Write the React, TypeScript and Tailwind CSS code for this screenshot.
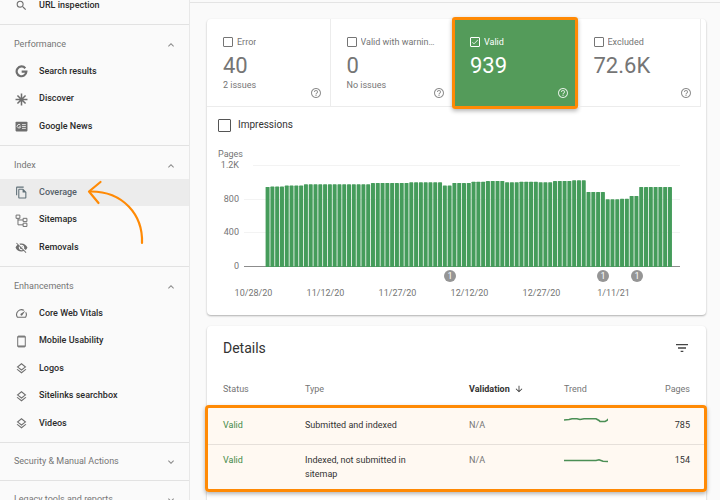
import { useState, type ReactNode } from "react";
import clsx from "clsx";
import {
  MdArrowDownward,
  MdCheck,
  MdFilterList,
  MdHelpOutline,
  MdKeyboardArrowDown,
  MdKeyboardArrowUp,
  MdOutlineFileCopy,
  MdOutlineLayers,
  MdOutlineSpeed,
  MdSearch,
  MdVisibilityOff
} from "react-icons/md";

type NavItem = { label: string; icon: ReactNode };
type NavSection = { title: string; items: NavItem[] };

const sections: NavSection[] = [
  {
    title: "Performance",
    items: [
      { label: "Search results", icon: <GoogleIcon /> },
      { label: "Discover", icon: <DiscoverIcon /> },
      { label: "Google News", icon: <NewsIcon /> }
    ]
  },
  {
    title: "Index",
    items: [
      { label: "Coverage", icon: <MdOutlineFileCopy /> },
      { label: "Sitemaps", icon: <SitemapIcon /> },
      { label: "Removals", icon: <MdVisibilityOff /> }
    ]
  },
  {
    title: "Enhancements",
    items: [
      { label: "Core Web Vitals", icon: <MdOutlineSpeed /> },
      { label: "Mobile Usability", icon: <PhoneIcon /> },
      { label: "Logos", icon: <MdOutlineLayers /> },
      { label: "Sitelinks searchbox", icon: <MdOutlineLayers /> },
      { label: "Videos", icon: <MdOutlineLayers /> }
    ]
  },
  { title: "Security & Manual Actions", items: [] },
  { title: "Legacy tools and reports", items: [] }
];

const metrics = [
  { id: "error", label: "Error", value: "40", note: "2 issues" },
  { id: "warning", label: "Valid with warnings", value: "0", note: "No issues" },
  { id: "valid", label: "Valid", value: "939", note: "" },
  { id: "excluded", label: "Excluded", value: "72.6K", note: "" }
];

// [number of days, indexed pages]
const pageRuns = [
  [1, 940], [3, 944], [4, 956], [14, 970], [8, 986], [7, 994], [2, 957],
  [4, 987], [3, 1001], [4, 1010], [3, 995], [4, 1002], [3, 995], [4, 1010],
  [3, 1018], [4, 880], [3, 792], [2, 798], [2, 833], [7, 940]
];
const dailyPages = pageRuns.flatMap(([days, pages]) => Array<number>(days).fill(pages));

const rows = [
  {
    type: "Submitted and indexed",
    pages: 785,
    trend: "M0 2 L5 1.5 L8 0.8 L13 0.8 L16 1.5 L20 0.8 L32 0.8 L35 2.5 L36 3.5 L41 3.5 L43 2.5 L44 1"
  },
  {
    type: "Indexed, not submitted in sitemap",
    pages: 154,
    trend: "M0 7.5 L32 7.5 L35 6.8 L37 7.5 L39 8.3 L44 8.5"
  }
];

export default function App() {
  return (
    <div className="flex h-screen overflow-hidden bg-[#fafafa] font-[Roboto,'Liberation_Sans',sans-serif] text-[9px] text-[#757575]">
      <Sidebar />
      <main className="min-w-0 flex-1">
        <div className="h-[3px] border-b border-[#e4e4e4]" />
        <div className="space-y-[11px] pt-4 pr-3.5 pl-[17px]">
          <CoverageCard />
          <DetailsCard />
        </div>
      </main>
    </div>
  );
}

function Sidebar() {
  return (
    <nav className="-mt-2 w-[190px] shrink-0 border-r border-[#e8e8e8]">
      <ul className="pb-[5px]">
        <NavLink label="URL inspection" icon={<MdSearch />} />
      </ul>
      {sections.map((section) => (
        <Section key={section.title} section={section} />
      ))}
    </nav>
  );
}

function Section({ section }: { section: NavSection }) {
  const expandable = section.items.length > 0;
  const [open, setOpen] = useState(expandable);

  return (
    <section className="border-t border-[#e2e2e2] py-[5px]">
      <button
        type="button"
        aria-expanded={open}
        onClick={() => setOpen(!open)}
        className={clsx(
          "flex w-full items-center justify-between pr-3 pl-3.5 text-left",
          expandable ? "h-7 pt-px" : "h-[27px]"
        )}
      >
        {section.title}
        {open ? (
          <MdKeyboardArrowUp className="size-3 text-[#8a8a8a]" />
        ) : (
          <MdKeyboardArrowDown className="size-3 text-[#8a8a8a]" />
        )}
      </button>
      {open && expandable ? (
        <ul>
          {section.items.map((item) => (
            <NavLink key={item.label} {...item} active={item.label === "Coverage"} />
          ))}
        </ul>
      ) : null}
    </section>
  );
}

function NavLink({ label, icon, active = false }: NavItem & { active?: boolean }) {
  return (
    <li className={clsx("relative h-[27px] even:h-7", active && "bg-[#ececec]")}>
      <a
        href="#"
        aria-current={active ? "page" : undefined}
        className={clsx(
          "flex h-full items-center gap-[11px] pl-[15px] font-medium",
          active ? "text-[#546069]" : "text-[#2b2b2b]"
        )}
      >
        <span
          className={clsx(
            "[&>svg]:size-[13px]",
            active ? "text-[#607078]" : "text-[#6e6e6e]"
          )}
        >
          {icon}
        </span>
        {label}
      </a>
      {active ? <ArrowNote /> : null}
    </li>
  );
}

function ArrowNote() {
  return (
    <svg
      viewBox="0 0 60 68"
      className="pointer-events-none absolute top-0 left-[86px] z-10 h-[68px] w-[60px]"
      fill="none"
      stroke="#ff8a05"
      strokeWidth="2.2"
      strokeLinecap="round"
      strokeLinejoin="round"
    >
      <path d="M56 64 C57 36 37 12 4 12.5" />
      <path d="M14.5 3 L3 12.5 L12.5 24" />
    </svg>
  );
}

function CoverageCard() {
  const [selected, setSelected] = useState("valid");

  return (
    <section className="rounded-sm bg-white pb-4 shadow-[0_1px_2px_rgba(0,0,0,0.3)]">
      <div className="mr-[5px] grid grid-cols-4">
        {metrics.map((metric) => {
          const checked = metric.id === selected;
          return (
            <div
              key={metric.id}
              className={clsx(
                "relative h-[88px] border-r border-b border-[#ececec] pt-[17px] pr-[18px] pl-4",
                checked && "bg-[#549b5a] text-white"
              )}
            >
              <label className="flex items-center gap-1 leading-3">
                <Checkbox
                  small
                  checked={checked}
                  onChange={() => setSelected(metric.id)}
                />
                <span className="truncate">{metric.label}</span>
              </label>
              <p className="mt-[5px] text-[22px] leading-[26px]">{metric.value}</p>
              <p className="leading-3">{metric.note}</p>
              <button
                type="button"
                aria-label={`About ${metric.label}`}
                className="absolute right-2 bottom-[7px] text-xs opacity-80"
              >
                <MdHelpOutline />
              </button>
              {checked ? (
                <div className="pointer-events-none absolute -top-0.5 -right-px -bottom-[3px] -left-0.5 rounded-[3px] border-3 border-[#ff8a05] shadow-[0_2px_4px_rgba(0,0,0,0.3)]" />
              ) : null}
            </div>
          );
        })}
      </div>
      <label className="mt-[11px] ml-[11px] flex w-fit items-center gap-[7px] text-[10px] leading-3.5 text-[#333]">
        <Checkbox />
        Impressions
      </label>
      <PagesChart />
    </section>
  );
}

type CheckboxProps = { small?: boolean; checked?: boolean; onChange?: () => void };

function Checkbox({ small = false, checked, onChange }: CheckboxProps) {
  return (
    <span className="relative flex shrink-0">
      <input
        type="checkbox"
        checked={checked}
        onChange={onChange}
        className={clsx(
          "peer appearance-none rounded-[1px] border border-current",
          small ? "size-2.5" : "size-[13px] text-[#555]"
        )}
      />
      <MdCheck className="pointer-events-none absolute inset-px hidden size-2 peer-checked:block" />
    </span>
  );
}

function PagesChart() {
  const base = 118;
  const scale = 101 / 1200;
  const ticks = [
    { value: 1200, label: "1.2K" },
    { value: 800, label: "800" },
    { value: 400, label: "400" },
    { value: 0, label: "0" }
  ];
  const dates = ["10/28/20", "11/12/20", "11/27/20", "12/12/20", "12/27/20", "1/11/21"];
  const markers = [243, 396, 430];

  return (
    <svg viewBox="0 0 499 151" className="mt-4 block w-full" fill="#757575" fontSize="9">
      <text x="11" y="9">Pages</text>
      {ticks.map((tick) => {
        const y = base - tick.value * scale;
        return (
          <g key={tick.label}>
            <line
              x1={tick.value === 1200 ? 46 : 37}
              x2="473"
              y1={Math.round(y) + 0.5}
              y2={Math.round(y) + 0.5}
              stroke={tick.value === 0 ? "#8c8c8c" : "#f3f3f3"}
            />
            <text x="32" y={y + 3} textAnchor="end">{tick.label}</text>
          </g>
        );
      })}
      {dailyPages.map((pages, i) => (
        <rect
          key={i}
          x={58.6 + i * 4.79}
          y={base - pages * scale}
          width="4"
          height={pages * scale + 1}
          rx="0.6"
          fill="#459c5b"
        />
      ))}
      {markers.map((x) => (
        <g key={x}>
          <circle cx={x} cy="128" r="6" fill="#959595" />
          <text x={x} y="131" textAnchor="middle" fill="#fff">1</text>
        </g>
      ))}
      {dates.map((date, i) => (
        <text key={date} x={46.5 + i * 72} y="148" textAnchor="middle">{date}</text>
      ))}
    </svg>
  );
}

function DetailsCard() {
  return (
    <section className="rounded-sm bg-white pb-10 shadow-[0_1px_2px_rgba(0,0,0,0.3)]">
      <header className="flex items-center justify-between px-4 pt-3">
        <h2 className="text-sm leading-5 text-[#333]">Details</h2>
        <button type="button" aria-label="Filter rows" className="text-base text-[#444]">
          <MdFilterList />
        </button>
      </header>
      <div className="relative">
        <table className="mt-[18px] w-full table-fixed text-left leading-3.5">
          <thead>
            <tr className="h-[31px] align-top [&>th]:pt-1.5 [&>th]:font-normal">
              <th className="w-[98px] pl-4">Status</th>
              <th>Type</th>
              <th className="w-[95px] text-[#333]">
                <button type="button" className="flex items-center gap-1 font-bold">
                  Validation
                  <MdArrowDownward className="size-2.5" />
                </button>
              </th>
              <th className="w-[60px]">Trend</th>
              <th className="w-[82px] pr-4 text-right">Pages</th>
            </tr>
          </thead>
          <tbody className="bg-[#fff9f2]">
            {rows.map((row) => (
              <tr
                key={row.type}
                className="align-top not-first:border-t not-first:border-[#e6e0da] [&>td]:pt-[11px] [&>td]:pb-3 last:[&>td]:pt-2 last:[&>td]:pb-[9px]"
              >
                <td className="pl-4 text-[#3f8a48]">Valid</td>
                <td className="pr-14 text-[#333]">{row.type}</td>
                <td>N/A</td>
                <td>
                  <svg viewBox="0 0 44 14" className="h-3.5 w-11" fill="none" stroke="#4b8f55" strokeWidth="1.6">
                    <path d={row.trend} />
                  </svg>
                </td>
                <td className="pr-4 text-right text-[#333]">{row.pages}</td>
              </tr>
            ))}
          </tbody>
        </table>
        <div className="pointer-events-none absolute top-[29px] -right-px -bottom-0.5 -left-0.5 rounded border-3 border-[#ff8a05] shadow-[0_2px_4px_rgba(0,0,0,0.3)]" />
      </div>
    </section>
  );
}

function GoogleIcon() {
  return (
    <svg viewBox="0 0 24 24" fill="none" stroke="currentColor" strokeWidth="4">
      <path d="M19 6 A9 9 0 1 0 21 12.2 H12.3" />
    </svg>
  );
}

function DiscoverIcon() {
  return (
    <svg viewBox="0 0 24 24" fill="none" stroke="currentColor" strokeWidth="2.8">
      <path d="M12 1 V23 M1 12 H23 M4.5 4.5 L19.5 19.5 M19.5 4.5 L4.5 19.5" />
    </svg>
  );
}

function NewsIcon() {
  return (
    <svg viewBox="0 0 24 24" fill="none">
      <rect x="1" y="3" width="22" height="18" rx="1.5" fill="currentColor" />
      <path
        d="M10 9.5 A3.3 3.3 0 1 0 10.5 12.5 H7.5 M13 8.5 H20 M13 12 H20 M13 15.5 H20"
        stroke="#fafafa"
        strokeWidth="1.5"
      />
    </svg>
  );
}

function SitemapIcon() {
  return (
    <svg viewBox="0 0 24 24" fill="none" stroke="currentColor" strokeWidth="1.8">
      <path d="M2 2 H9 V8 H2 Z M15 8 H22 V14 H15 Z M15 17 H22 V23 H15 Z M5.5 8 V20 H15 M5.5 11 H15" />
    </svg>
  );
}

function PhoneIcon() {
  return (
    <svg viewBox="0 0 24 24" fill="none" stroke="currentColor" strokeWidth="1.8">
      <rect x="5" y="2" width="14" height="20" rx="1.5" />
      <path d="M5 3.5 H19 M5 20.5 H19" strokeWidth="2.6" />
    </svg>
  );
}
